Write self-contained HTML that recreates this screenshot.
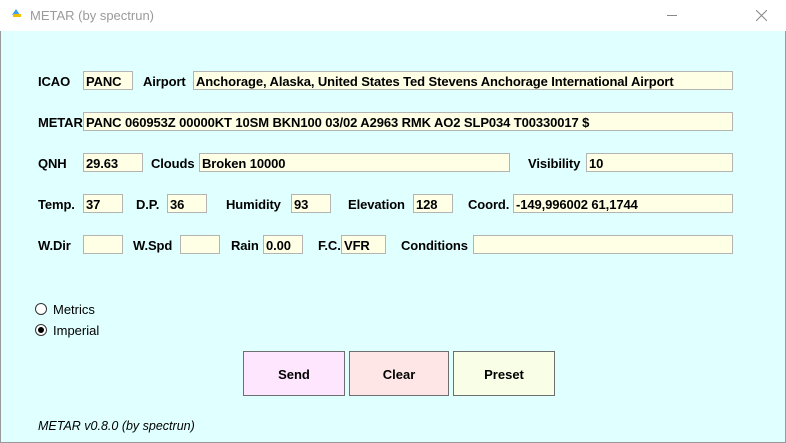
<!DOCTYPE html>
<html><head><meta charset="utf-8"><style>
*{margin:0;padding:0;box-sizing:border-box}
body{width:786px;height:443px;overflow:hidden;background:#fff;font-family:"Liberation Sans",sans-serif;position:relative}
.win{position:absolute;left:0;top:0;width:786px;height:443px;border:1px solid #9a9a9a;border-top:1px solid #c8c8c8}
.title{position:absolute;left:0;top:0;width:786px;height:31px;background:#fff}
.content{position:absolute;left:1px;top:31px;width:784px;height:411px;background:#e0ffff}
.l{position:absolute;font-weight:bold;font-size:13px;color:#000;line-height:21px;letter-spacing:-0.1px}
.i{position:absolute;height:19px;background:#ffffe6;border:1px solid #b4b4b4;font-weight:bold;font-size:13px;line-height:19px;padding-left:2px;white-space:nowrap;overflow:hidden;letter-spacing:-0.1px}
.b{position:absolute;top:351px;height:45px;border:1px solid #6e6e6e;font-weight:bold;font-size:13px;text-align:center;line-height:45px}
.r{position:absolute;width:12px;height:12px;border-radius:50%;border:1px solid #333;background:#fff}
.t{position:absolute;font-size:13px;line-height:16px}
</style></head><body>
<div class="win"></div>
<div class="title">
<svg style="position:absolute;left:12px;top:9px" width="10" height="10"><polygon points="0,6 4,0 8,6" fill="#3ca0e6"/><rect x="1" y="5" width="8" height="3" fill="#f0c000"/></svg>
<div style="position:absolute;left:30px;top:8px;font-size:13px;color:#9a9a9a">METAR (by spectrun)</div>
<div style="position:absolute;left:667px;top:15px;width:10px;height:1px;background:#888"></div>
<svg style="position:absolute;left:756px;top:10px" width="11" height="11"><path d="M0,0L11,11M11,0L0,11" stroke="#888" stroke-width="1"/></svg>
</div>
<div class="content"></div>

<div class="l" style="left:38px;top:71px">ICAO</div>
<div class="i" style="left:83px;top:71px;width:50px">PANC</div>
<div class="l" style="left:143px;top:71px">Airport</div>
<div class="i" style="left:193px;top:71px;width:540px">Anchorage, Alaska, United States Ted Stevens Anchorage International Airport</div>

<div class="l" style="left:38px;top:112px">METAR</div>
<div class="i" style="left:83px;top:112px;width:650px">PANC 060953Z 00000KT 10SM BKN100 03/02 A2963 RMK AO2 SLP034 T00330017 $</div>

<div class="l" style="left:38px;top:153px">QNH</div>
<div class="i" style="left:83px;top:153px;width:60px">29.63</div>
<div class="l" style="left:151px;top:153px">Clouds</div>
<div class="i" style="left:199px;top:153px;width:311px">Broken 10000</div>
<div class="l" style="left:528px;top:153px">Visibility</div>
<div class="i" style="left:586px;top:153px;width:147px">10</div>

<div class="l" style="left:38px;top:194px">Temp.</div>
<div class="i" style="left:83px;top:194px;width:40px">37</div>
<div class="l" style="left:136px;top:194px">D.P.</div>
<div class="i" style="left:167px;top:194px;width:40px">36</div>
<div class="l" style="left:226px;top:194px">Humidity</div>
<div class="i" style="left:291px;top:194px;width:40px">93</div>
<div class="l" style="left:348px;top:194px">Elevation</div>
<div class="i" style="left:413px;top:194px;width:40px">128</div>
<div class="l" style="left:468px;top:194px">Coord.</div>
<div class="i" style="left:513px;top:194px;width:220px">-149,996002 61,1744</div>

<div class="l" style="left:38px;top:235px">W.Dir</div>
<div class="i" style="left:83px;top:235px;width:40px"></div>
<div class="l" style="left:133px;top:235px">W.Spd</div>
<div class="i" style="left:180px;top:235px;width:40px"></div>
<div class="l" style="left:231px;top:235px">Rain</div>
<div class="i" style="left:263px;top:235px;width:40px">0.00</div>
<div class="l" style="left:318px;top:235px">F.C.</div>
<div class="i" style="left:341px;top:235px;width:45px">VFR</div>
<div class="l" style="left:401px;top:235px">Conditions</div>
<div class="i" style="left:473px;top:235px;width:260px"></div>

<div class="r" style="left:35px;top:303px"></div>
<div class="t" style="left:53px;top:302px">Metrics</div>
<div class="r" style="left:35px;top:324px"><div style="position:absolute;left:2px;top:2px;width:6px;height:6px;border-radius:50%;background:#000"></div></div>
<div class="t" style="left:53px;top:323px">Imperial</div>

<div class="b" style="left:243px;width:102px;background:#ffe6ff">Send</div>
<div class="b" style="left:349px;width:100px;background:#ffe6e6">Clear</div>
<div class="b" style="left:453px;width:102px;background:#f8ffe6">Preset</div>

<div class="t" style="left:38px;top:418px;font-style:italic;font-size:12.5px">METAR v0.8.0 (by spectrun)</div>
</body></html>
